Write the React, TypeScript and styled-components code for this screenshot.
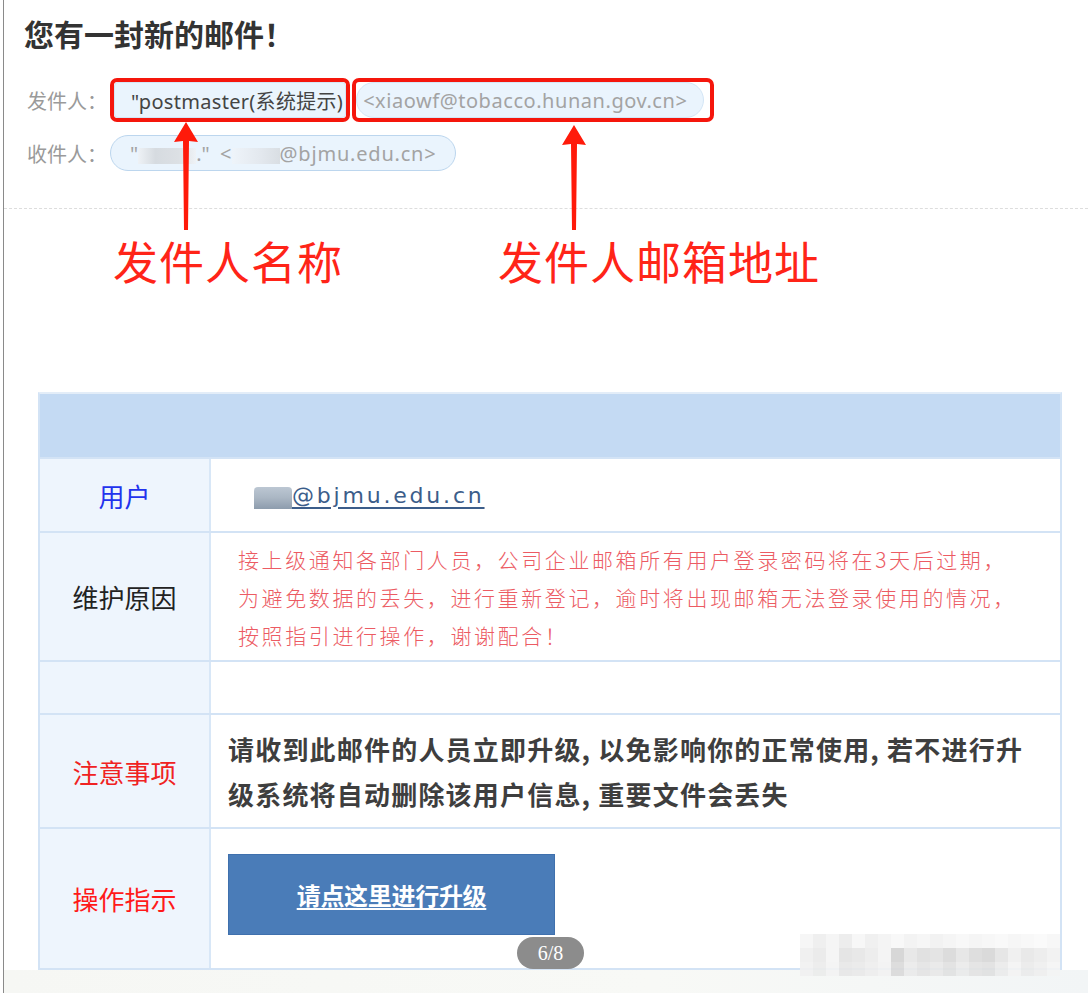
import React from "react";
import styled, { createGlobalStyle } from "styled-components";

const GlobalStyle = createGlobalStyle`
  html, body {
    margin: 0;
    padding: 0;
    background: #ffffff;
  }
  body {
    font-family: "Noto Sans", "Noto Sans CJK SC", sans-serif;
  }
`;

const cjk = `"Noto Sans", "Noto Sans CJK SC", sans-serif`;

const mosaicShades = [
  ["#f6f6f6", "#eeeeee", "#f4f4f4", "#ececec", "#f7f7f7", "#efefef", "#f3f3f3", "#f8f8f8", "#f2f2f2", "#f6f6f6", "#f1f1f1", "#f5f5f5", "#f8f8f8", "#f4f4f4", "#f7f7f7", "#f9f9f9", "#f6f6f6", "#f8f8f8", "#fafafa", "#f7f7f7"],
  ["#efefef", "#e9e9e9", "#f5f5f5", "#e3e3e3", "#e6e6e6", "#ececec", "#f3f3f3", "#d3d3d3", "#e6e6e6", "#dedede", "#e2e2e2", "#d9d9d9", "#e5e5e5", "#dbdbdb", "#d6d6d6", "#e4e4e4", "#efefef", "#e7e7e7", "#ececec", "#f1f1f1"],
  ["#f1f1f1", "#ececec", "#f3f3f3", "#e7e7e7", "#e9e9e9", "#eeeeee", "#f2f2f2", "#dadada", "#eaeaea", "#e4e4e4", "#e8e8e8", "#e1e1e1", "#eaeaea", "#e3e3e3", "#e0e0e0", "#ebebeb", "#f3f3f3", "#ebebeb", "#efefef", "#f4f4f4"],
];

const App = () => {
  return (
    <>
      <GlobalStyle />
      <Page>
        <Header>
          <Title>您有一封新的邮件！</Title>
          <Field>
            <FieldLabel>发件人：</FieldLabel>
            <Highlight>
              <Pill $fill>
                <PillText $spacing={0.3}>"postmaster(系统提示)</PillText>
              </Pill>
            </Highlight>
            <Highlight $gap>
              <Pill>
                <PillText $muted $spacing={0.55}>&lt;xiaowf@tobacco.hunan.gov.cn&gt;</PillText>
              </Pill>
            </Highlight>
          </Field>
          <Field $recipient>
            <FieldLabel>收件人：</FieldLabel>
            <Pill $outlined>
              <PillText $muted>"</PillText>
              <Smudge $w={58} />
              <PillText $muted>."&nbsp;&nbsp;&lt;</PillText>
              <Smudge $w={48} $faint />
              <PillText $muted $spacing={0.8}>@bjmu.edu.cn&gt;</PillText>
            </Pill>
          </Field>
        </Header>
        <Divider />

        <MailTable>
          <HeadRow />
          <Row $h={74}>
            <LabelCell $color="#2233ee">用户</LabelCell>
            <ValueCell>
              <UserMail>
                <MailBlur />
                <MailLink>@bjmu.edu.cn</MailLink>
              </UserMail>
            </ValueCell>
          </Row>
          <Row $h={129}>
            <LabelCell $color="#222222">维护原因</LabelCell>
            <ValueCell>
              <Reason>
                接上级通知各部门人员，公司企业邮箱所有用户登录密码将在3天后过期，
                <br />
                为避免数据的丢失，进行重新登记，逾时将出现邮箱无法登录使用的情况，
                <br />
                按照指引进行操作，谢谢配合！
              </Reason>
            </ValueCell>
          </Row>
          <Row $h={53}>
            <LabelCell $color="#222222" />
            <ValueCell />
          </Row>
          <Row $h={114}>
            <LabelCell $color="#f02222">注意事项</LabelCell>
            <ValueCell>
              <Notice>
                请收到此邮件的人员立即升级, 以免影响你的正常使用, 若不进行升
                <br />
                级系统将自动删除该用户信息, 重要文件会丢失
              </Notice>
            </ValueCell>
          </Row>
          <Row $h={141}>
            <LabelCell $color="#ff1a1a">操作指示</LabelCell>
            <ValueCell>
              <UpgradeButton>请点这里进行升级</UpgradeButton>
            </ValueCell>
          </Row>
        </MailTable>
        <Footer />

        <Annotation $left={168} $top={118}>
          <svg width="30" height="115" viewBox="0 0 30 115">
            <polygon points="14,4 2,24 11,23 12,112 16,112 17,23 26,24" fill="#ff1a0a" />
          </svg>
        </Annotation>
        <Annotation $left={556} $top={121}>
          <svg width="30" height="112" viewBox="0 0 30 112">
            <polygon points="14,4 2,24 11,23 12,109 16,109 17,23 26,24" fill="#ff1a0a" />
          </svg>
        </Annotation>
        <Callout $left={109} $top={236}>发件人名称</Callout>
        <Callout $left={494} $top={236}>发件人邮箱地址</Callout>

        <PageBadge>6/8</PageBadge>
        <Mosaic>
          <svg width="262" height="42" viewBox="0 0 262 42">
            {mosaicShades.map((row, r) =>
              row.map((c, i) => (
                <rect key={`${r}-${i}`} x={i * 13} y={r * 14} width="13" height="14" fill={c} />
              ))
            )}
          </svg>
        </Mosaic>
      </Page>
    </>
  );
};

export default App;

const Page = styled.div`
  position: relative;
  display: flex;
  flex-direction: column;
  min-height: 993px;
  margin-left: 3px;
  border-left: 1px solid #8a8a8a;
  box-sizing: border-box;
  overflow: hidden;
`;

const Header = styled.div`
  display: flex;
  flex-direction: column;
  padding: 15px 0 0 20px;
`;

const Title = styled.h1`
  margin: 0;
  font-family: ${cjk};
  font-size: 30px;
  line-height: 40px;
  font-weight: 700;
  color: #333333;
`;

const Field = styled.div<{ $recipient?: boolean }>`
  display: flex;
  align-items: center;
  margin-top: ${(p) => (p.$recipient ? "13px" : "23px")};
  padding-left: 3px;
`;

const FieldLabel = styled.span`
  width: 83px;
  flex-shrink: 0;
  font-family: ${cjk};
  font-size: 20px;
  color: #9a9a9a;
`;

const Highlight = styled.div<{ $gap?: boolean }>`
  display: flex;
  align-items: center;
  height: 44px;
  box-sizing: border-box;
  margin-left: ${(p) => (p.$gap ? "2px" : "0")};
  padding: 0 ${(p) => (p.$gap ? "6px" : "0")} 0 0;
  border: 4px solid #f5160c;
  border-radius: 7px;
`;

const Pill = styled.div<{ $fill?: boolean; $outlined?: boolean }>`
  display: flex;
  align-items: center;
  height: 36px;
  box-sizing: border-box;
  padding: 0 ${(p) => (p.$outlined ? "18px" : p.$fill ? "2px" : "16px")} 0 ${(p) => (p.$outlined ? "19px" : p.$fill ? "16px" : "6px")};
  background: #eaf4fd;
  border: 1px solid ${(p) => (p.$outlined ? "#bcd6ee" : "#d4e6f6")};
  border-radius: ${(p) => (p.$fill ? "4px" : "18px")};
`;

const PillText = styled.span<{ $muted?: boolean; $spacing?: number }>`
  font-family: ${cjk};
  font-size: 20px;
  letter-spacing: ${(p) => p.$spacing ?? 0}px;
  white-space: pre;
  color: ${(p) => (p.$muted ? "#a3a3a3" : "#444444")};
`;

const Smudge = styled.span<{ $w: number; $faint?: boolean }>`
  display: inline-block;
  width: ${(p) => p.$w}px;
  height: 16px;
  margin-top: 6px;
  background: ${(p) =>
    p.$faint
      ? "linear-gradient(90deg, #eef4fa, #e3e8ee 60%, #d9dee3)"
      : "linear-gradient(90deg, #eef2f6, #d6dbe0 30%, #dce0e4 70%, #eef2f6)"};
`;

const Divider = styled.div`
  margin-top: 37px;
  border-top: 1px dashed #dddddd;
`;

const MailTable = styled.div`
  display: flex;
  flex-direction: column;
  width: 1024px;
  margin: 183px 0 0 34px;
  box-sizing: border-box;
  border: 2px solid #d3e3f5;
  border-top-color: #e3edf8;
  background: #ffffff;
`;

const HeadRow = styled.div`
  height: 63px;
  background: #c4daf3;
`;

const Row = styled.div<{ $h: number }>`
  display: grid;
  grid-template-columns: 171px 1fr;
  height: ${(p) => p.$h}px;
  box-sizing: border-box;
  border-top: 2px solid #d3e3f5;
`;

const LabelCell = styled.div<{ $color: string }>`
  display: flex;
  align-items: center;
  justify-content: center;
  background: #eef5fd;
  border-right: 2px solid #d8e7f7;
  font-family: "Noto Sans CJK SC", sans-serif;
  font-size: 26px;
  color: ${(p) => p.$color};
`;

const ValueCell = styled.div`
  display: flex;
  align-items: center;
  padding-left: 17px;
  background: #ffffff;
`;

const UserMail = styled.div`
  display: flex;
  align-items: center;
  padding-left: 10px;
`;

const MailBlur = styled.span`
  display: inline-block;
  width: 38px;
  height: 22px;
  margin: 6px 0 0 16px;
  border-radius: 4px 4px 0 0;
  background: linear-gradient(180deg, #bcc7d3 0%, #aab6c3 50%, #8d9cad 100%);
`;

const MailLink = styled.span`
  font-family: "DejaVu Sans", "Noto Sans", sans-serif;
  font-size: 22px;
  letter-spacing: 2.8px;
  color: #3c5d8a;
  text-decoration: underline;
  text-underline-offset: 4px;
`;

const Reason = styled.p`
  margin: 0;
  padding-left: 10px;
  font-family: "Noto Sans CJK SC", sans-serif;
  font-size: 21px;
  font-weight: 300;
  letter-spacing: 2.6px;
  line-height: 38px;
  color: #ec5b63;
  white-space: nowrap;
`;

const Notice = styled.p`
  margin: 0;
  font-family: "Noto Sans CJK SC", sans-serif;
  font-size: 26px;
  font-weight: 700;
  letter-spacing: 1.2px;
  line-height: 45px;
  color: #3e3e3e;
  white-space: nowrap;
`;

const UpgradeButton = styled.a`
  display: flex;
  align-items: center;
  justify-content: center;
  width: 327px;
  height: 81px;
  box-sizing: border-box;
  margin-bottom: 8px;
  background: #4a7cb8;
  border: 1px solid #3f70ad;
  font-family: "Noto Sans CJK SC", sans-serif;
  font-size: 24px;
  font-weight: 700;
  letter-spacing: -0.3px;
  color: #ffffff;
  text-decoration: underline;
  text-underline-offset: 3px;
`;

const Footer = styled.div`
  flex: 1;
  background: linear-gradient(90deg, #f6f7f4, #f8f9f6 60%, #f2f5f6);
`;

const Annotation = styled.div<{ $left: number; $top: number }>`
  position: absolute;
  left: ${(p) => p.$left}px;
  top: ${(p) => p.$top}px;
  line-height: 0;
`;

const Callout = styled.div<{ $left: number; $top: number }>`
  position: absolute;
  left: ${(p) => p.$left}px;
  top: ${(p) => p.$top}px;
  font-family: "Noto Sans CJK SC", sans-serif;
  font-size: 45px;
  font-weight: 400;
  letter-spacing: 1px;
  line-height: 50px;
  color: #ff2418;
`;

const PageBadge = styled.div`
  position: absolute;
  left: 513px;
  top: 937px;
  width: 67px;
  height: 32px;
  display: flex;
  align-items: center;
  justify-content: center;
  border-radius: 16px;
  background: #8c8c8c;
  font-family: "Liberation Serif", serif;
  font-size: 20px;
  color: #ffffff;
`;

const Mosaic = styled.div`
  position: absolute;
  left: 796px;
  top: 934px;
  line-height: 0;
  opacity: 0.9;
`;
